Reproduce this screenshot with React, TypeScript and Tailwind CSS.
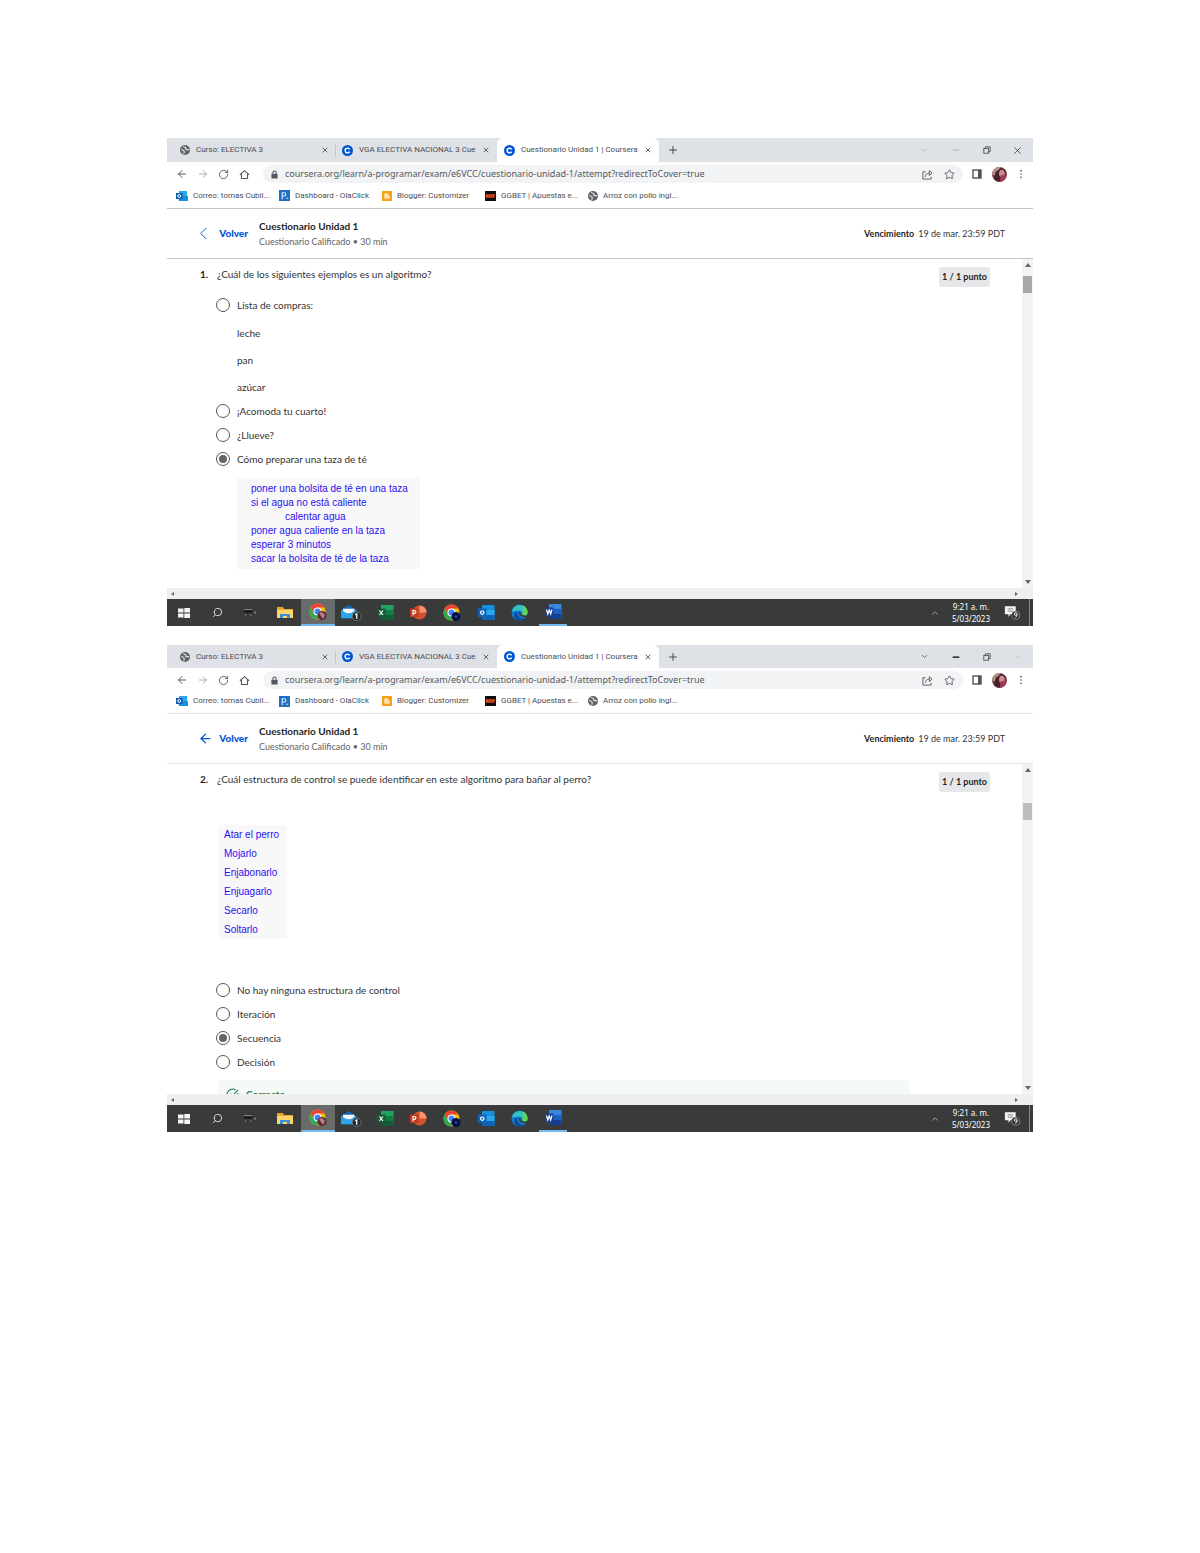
import React from "react";
import {
  ArrowLeft,
  ArrowRight,
  CheckCircle,
  ChevronDown,
  ChevronUp,
  Minus,
  Plus,
  RotateCw,
  Search,
  Star,
  X,
} from "lucide-react";

const Globe = () => (
  <svg viewBox="0 0 12 12" className="size-[10px] shrink-0">
    <circle cx="6" cy="6" r="6" fill="#5f6368" />
    <path d="M1.500 5.500C3 6 4.500 6 5 7.500S4 10 5 10.800M4 1.500c.5 1.500 2 1 3 2s-1 1.500.5 2 2.500-.5 3.500.5" stroke="#e8eaed" strokeWidth="1.300" fill="none" />
  </svg>
);

const CourseraIcon = () => (
  <svg viewBox="0 0 12 12" className="size-[11px] shrink-0">
    <circle cx="6" cy="6" r="6" fill="#0056d2" />
    <path d="M8.300 4.700A2.600 2.600 0 1 0 8.300 7.300" stroke="#fff" strokeWidth="1.600" fill="none" />
  </svg>
);

type TabProps = { icon: React.ReactNode; title: string; active?: boolean; divider?: boolean };

const Tab = ({ icon, title, active, divider }: TabProps) => (
  <div
    className={
      active
        ? "flex w-[162px] items-center gap-[6px] rounded-t-md bg-white px-[7px]"
        : "flex w-[162px] items-center gap-[6px] px-[7px]"
    }
  >
    {icon}
    <span className="flex-1 whitespace-nowrap text-[8px] leading-[12px] text-[#4a4d55]">{title}</span>
    <button aria-label="Cerrar pestaña" className="text-[#45484d]">
      <X size={8} strokeWidth={2.5} />
    </button>
    {divider && <span className="-mr-2 h-3 w-px bg-[#c3c6cc]" />}
  </div>
);

const OutlookMark = () => (
  <svg viewBox="0 0 12 10" className="h-[10px] w-[12px] shrink-0">
    <rect x="3" y="0" width="8" height="6" fill="#28a8ea" />
    <path d="M2 5h10v5H3z" fill="#1490df" />
    <rect x="0" y="2" width="6.500" height="6" fill="#0f5fb5" />
    <circle cx="3.200" cy="5" r="1.400" fill="none" stroke="#fff" />
  </svg>
);

const SquareMark = () => (
  <svg viewBox="0 0 12 12" className="size-[11px] shrink-0">
    <rect width="12" height="12" fill="#1f6fc5" />
    <path d="M3.500 10V3h2.200a1.800 1.800 0 0 1 0 3.600H3.500M8 9h2" stroke="#dcebfa" strokeWidth="1.200" fill="none" />
  </svg>
);

const BloggerMark = () => (
  <svg viewBox="0 0 12 12" className="size-[10px] shrink-0">
    <rect width="12" height="12" rx="1" fill="#f9a01b" />
    <path d="M3 3h4v2.500h2V9H3z" fill="#fff" />
    <path d="M4.500 4.800h1.500M4.500 7.200h3" stroke="#f9a01b" />
  </svg>
);

const GgMark = () => (
  <svg viewBox="0 0 12 11" className="h-[10px] w-[11px] shrink-0">
    <rect width="12" height="11" fill="#0c0c0c" />
    <path d="M1 3.500h10L10 7.500H1z" fill="#f04a16" />
    <path d="M3.500 4.500v2M6 4.500v2M8.500 4.500v2" stroke="#7c1f05" strokeWidth=".8" />
  </svg>
);

const Bookmark = ({ icon, children }: { icon: React.ReactNode; children: string }) => (
  <a href="#" className="flex w-[103px] items-center gap-[5px] whitespace-nowrap text-[8px] leading-[12px] text-[#4a4d55]">
    {icon}
    {children}
  </a>
);

const HomeIcon = () => (
  <svg viewBox="0 0 12 12" className="size-[11px]" fill="none" stroke="currentColor" strokeWidth="1.200">
    <path d="M1 6.300L6 1.800l5 4.500M2.700 5.500V10.400h6.600V5.500" />
  </svg>
);

const LockIcon = () => (
  <svg viewBox="0 0 8 10" className="h-[9px] w-[7px]">
    <rect x="0.500" y="4" width="7" height="5.500" rx=".6" fill="#55595f" />
    <path d="M2.200 4V2.700a1.800 1.800 0 0 1 3.600 0V4" fill="none" stroke="#55595f" strokeWidth="1.200" />
  </svg>
);

const ShareIcon = () => (
  <svg viewBox="0 0 12 12" className="size-[11px]" fill="none" stroke="currentColor" strokeWidth="1">
    <path d="M4 3H1v8h9V8.500M3.500 8.500c.3-2.500 2-4 4.500-4M8 1.800l3 2.700-3 2.700z" />
  </svg>
);

const SidePanel = () => (
  <svg viewBox="0 0 10 10" className="size-[10px]">
    <rect x="1" y="1" width="8" height="8" fill="none" stroke="#4f545a" strokeWidth="1.400" />
    <rect x="6" y="1" width="3" height="8" fill="#4f545a" />
  </svg>
);

const Avatar = () => (
  <svg viewBox="0 0 16 16" className="size-[15px] rounded-full">
    <rect width="16" height="16" fill="#7a3d48" />
    <path d="M0 0h9L4 9 0 8z" fill="#b39283" />
    <path d="M4 5l6-4 5 3-3 5-5 7-5-3z" fill="#45202d" />
    <ellipse cx="10.500" cy="7" rx="3" ry="4" fill="#d08c90" />
    <path d="M9 9l5-1 1 5-6 3z" fill="#a33c50" />
  </svg>
);

const Kebab = () => (
  <svg viewBox="0 0 4 12" className="h-[10px] w-[4px]" fill="#4f545a">
    <circle cx="2" cy="2" r="1" />
    <circle cx="2" cy="6" r="1" />
    <circle cx="2" cy="10" r="1" />
  </svg>
);

const Restore = () => (
  <svg viewBox="0 0 10 10" className="size-[8px]" fill="none" stroke="#55585e" strokeWidth="1.200">
    <rect x="1" y="3" width="6" height="6" />
    <path d="M3 3V1h6v6H7" />
  </svg>
);

type Variant = "first" | "second";

const BrowserChrome = ({ variant }: { variant: Variant }) => (
  <div className="font-[Roboto,sans-serif]">
    <div className={variant === "first" ? "flex h-6 items-stretch bg-[#dee1e6] pl-[6px]" : "flex h-[23px] items-stretch bg-[#dee1e6] pl-[6px]"}>
      <Tab icon={<Globe />} title="Curso: ELECTIVA 3" divider />
      <Tab icon={<CourseraIcon />} title="VGA ELECTIVA NACIONAL 3 Cue" />
      <Tab icon={<CourseraIcon />} title="Cuestionario Unidad 1 | Coursera" active />
      <button aria-label="Nueva pestaña" className="ml-2 text-[#45484d]">
        <Plus size={12} strokeWidth={2} />
      </button>
      <div className="ml-auto grid w-[124px] grid-cols-4 items-center justify-items-center text-[#45484d]">
        <button aria-label="Buscar pestañas" className={variant === "first" ? "text-[#a9acb2]" : ""}>
          <ChevronDown size={9} />
        </button>
        <button aria-label="Minimizar" className={variant === "first" ? "text-[#b9bcc2]" : "text-black"}>
          <Minus size={10} strokeWidth={3} />
        </button>
        <button aria-label="Restaurar">
          <Restore />
        </button>
        <button aria-label="Cerrar" className={variant === "first" ? "" : "text-[#c0c3c9]"}>
          {variant === "first" ? <X size={11} /> : <ChevronDown size={10} />}
        </button>
      </div>
    </div>
    <div className="flex h-6 items-center pr-2 text-[#55595f]">
      <div className="grid w-[88px] grid-cols-4 justify-items-center pl-1">
        <button aria-label="Atrás"><ArrowLeft size={12} /></button>
        <button aria-label="Adelante" className="text-[#a9acb0]"><ArrowRight size={12} /></button>
        <button aria-label="Recargar"><RotateCw size={11} /></button>
        <button aria-label="Inicio"><HomeIcon /></button>
      </div>
      <div className="ml-2 flex h-[18px] flex-1 items-center rounded-full bg-[#f1f3f4] px-2">
        <LockIcon />
        <input
          aria-label="Dirección"
          readOnly
          className="ml-[7px] min-w-0 flex-1 bg-transparent font-['Noto_Sans',sans-serif] text-[9px] leading-[12px] text-[#55595f] outline-none"
          value="coursera.org/learn/a-programar/exam/e6VCC/cuestionario-unidad-1/attempt?redirectToCover=true"
        />
        <button aria-label="Compartir" className="mr-[11px]"><ShareIcon /></button>
        <button aria-label="Favorito"><Star size={11} /></button>
      </div>
      <div className="ml-[9px] flex items-center gap-[10px]">
        <button aria-label="Panel lateral"><SidePanel /></button>
        <button aria-label="Perfil"><Avatar /></button>
        <button aria-label="Menú" className="mx-[2px]"><Kebab /></button>
      </div>
    </div>
    <div
      className={
        variant === "first"
          ? "flex h-[23px] items-center border-b border-[#c4c6c9] pb-[3px] pl-[9px]"
          : "flex h-[22px] items-center border-b border-[#e2e3e5] pb-[3px] pl-[9px]"
      }
    >
      <Bookmark icon={<OutlookMark />}>Correo: tomas Cubil...</Bookmark>
      <Bookmark icon={<SquareMark />}>Dashboard - OlaClick</Bookmark>
      <Bookmark icon={<BloggerMark />}>Blogger: Customizer</Bookmark>
      <Bookmark icon={<GgMark />}>GGBET | Apuestas e...</Bookmark>
      <Bookmark icon={<Globe />}>Arroz con pollo ingl...</Bookmark>
    </div>
  </div>
);

const QuizHeader = ({ variant, back }: { variant: Variant; back: React.ReactNode }) => (
  <header
    className={
      variant === "first"
        ? "flex h-[50px] items-center border-b border-[#c4c6c9] pl-[31px] pr-7"
        : "flex h-[50px] items-center border-b border-[#e2e3e5] pl-[31px] pr-7"
    }
  >
    <a href="#" className="flex w-[61px] items-center justify-between pr-[11px] text-[10px] font-black text-[#0056d2]">
      {back}
      Volver
    </a>
    <div>
      <h1 className="text-[10px] font-bold leading-[15px] text-[#1f1f1f]">Cuestionario Unidad 1</h1>
      <p className="text-[9px] leading-[15px] text-[#636363]">Cuestionario Calificado • 30 min</p>
    </div>
    <p className="ml-auto text-[9px] text-[#333]">
      <b className="mr-1 text-[#1f1f1f]">Vencimiento</b>
      19 de mar. 23:59 PDT
    </p>
  </header>
);

const Option = ({ name, label, checked }: { name: string; label: string; checked?: boolean }) => (
  <label className="flex h-[24px] items-center gap-[7px]">
    <input
      type="radio"
      name={name}
      defaultChecked={checked}
      className="size-[14px] appearance-none rounded-full border border-[#555] bg-clip-content p-[2px] checked:bg-[#666]"
    />
    {label}
  </label>
);

const Triangle = ({ d }: { d: string }) => (
  <svg viewBox="0 0 6 6" className="size-[6px]" fill="#666">
    <path d={d} />
  </svg>
);

const Pane = ({ thumb, children }: { thumb: string; children: React.ReactNode }) => (
  <div>
    <div className="flex">
      <main className="min-w-0 flex-1 text-[10px] leading-[14px] text-[#333]">{children}</main>
      <div className="flex w-[11px] flex-col items-center bg-[#f3f3f3] py-[3px]">
        <Triangle d="M0 5L3 1l3 4z" />
        <div className={thumb} />
        <div className="mt-auto">
          <Triangle d="M0 1l3 4 3-4z" />
        </div>
      </div>
    </div>
    <div className="flex h-[11px] items-center justify-between bg-[#efefef] pl-[3px] pr-[14px]">
      <Triangle d="M4 1L1 3l3 2z" />
      <Triangle d="M2 1l3 2-3 2z" />
    </div>
  </div>
);

const Question = ({ number, text }: { number: string; text: string }) => (
  <div className="flex items-start">
    <b className="w-[17px] text-[#1f1f1f]">{number}</b>
    <h2>{text}</h2>
    <span className="ml-auto rounded-[2px] bg-[#e5e7e8] px-[3px] py-[3px] text-[9px] font-bold leading-[14px] text-[#1f1f1f]">
      1 / 1 punto
    </span>
  </div>
);

const Windows = () => (
  <svg viewBox="0 0 12 12" className="size-[12px]" fill="#f5f5f5">
    <path d="M0 1.500h5.500v4H0zM6.300 1H12v4.500H6.300zM0 6.500h5.500v4H0zM6.300 6.500H12V11H6.300z" />
  </svg>
);

const TaskView = () => (
  <svg viewBox="0 0 14 10" className="h-[9px] w-[13px]" fill="#858585">
    <rect x="0" y="1" width="9" height="4" fill="#111" />
    <path d="M0 1h9v1.500H0zM1 7h1v2H1zM7 7h1v2H7zM11 4h2v2h-2z" />
  </svg>
);

const Folder = () => (
  <svg viewBox="0 0 16 13" className="h-[13px] w-[16px]">
    <path d="M0 1h6l1 2h9v9H0z" fill="#e9a92a" />
    <rect y="4" width="16" height="8" fill="#fdd56b" />
    <path d="M3 12V8h10v4h-3v-2H6v2z" fill="#3c8fd9" />
  </svg>
);

const Chrome = ({ badge }: { badge: "photo" | "navy" }) => (
  <svg viewBox="0 0 18 18" className="size-[18px]">
    <circle cx="8.500" cy="8.500" r="8" fill="#fbbc05" />
    <path d="M1.600 4.500a8 8 0 0 1 13.800 0H8.500L5.200 10.400z" fill="#ea4335" />
    <path d="M1.600 4.500a8 8 0 0 0 6.900 12l3.300-6H5.200z" fill="#34a853" />
    <circle cx="8.500" cy="8.500" r="4" fill="#fff" />
    <circle cx="8.500" cy="8.500" r="3" fill="#4285f4" />
    <circle cx="13" cy="12.500" r="4.500" fill={badge === "photo" ? "#5b2a35" : "#07104f"} />
    {badge === "photo" && <path d="M10 10l3-1 3 3-2 4-2-3z" fill="#b98286" />}
    {badge === "navy" && <circle cx="13" cy="12.500" r="1" fill="#5c66a8" />}
  </svg>
);

const Mail = () => (
  <svg viewBox="0 0 22 18" className="h-[17px] w-[21px]">
    <path d="M0 6l8-5 8 5v9H0z" fill="#1069b4" />
    <path d="M2 5h12v5H2z" fill="#f4f6f8" />
    <path d="M0 6l8 5 8-5v9H0z" fill="#2aa6ea" />
    <circle cx="16.500" cy="13" r="4.700" fill="#26292b" stroke="#888" strokeWidth=".7" />
    <path d="M15 11.500l1.600-1V16" stroke="#fff" strokeWidth="1.300" fill="none" />
  </svg>
);

type OfficeProps = { light: string; mid: string; dark: string; glyph: string; round?: boolean };

const Office = ({ light, mid, dark, glyph, round }: OfficeProps) => (
  <svg viewBox="0 0 17 15" className="h-[15px] w-[17px]">
    {round ? (
      <>
        <circle cx="9.500" cy="7.500" r="7" fill={light} />
        <path d="M9.500 7.500V.5a7 7 0 0 1 7 7z" fill={mid} />
      </>
    ) : (
      <>
        <rect x="4" y="0" width="12.500" height="15" fill={light} />
        <rect x="4" y="5" width="12.500" height="5" fill={mid} />
        <rect x="4" y="10" width="12.500" height="5" fill={dark} />
      </>
    )}
    <rect x="0" y="3.500" width="8.500" height="8.500" fill={dark} />
    <path d={glyph} stroke="#fff" strokeWidth="1.200" fill="none" />
  </svg>
);

const Edge = () => (
  <svg viewBox="0 0 18 18" className="size-[17px]">
    <circle cx="9" cy="9" r="8.500" fill="#1579c9" />
    <path d="M1 8A8.300 8.300 0 0 1 17.500 9c0 3-3 4.500-6 3.500 1.500-2 .5-5.500-3-5.500S2 8 1 8z" fill="#35c1c4" />
    <path d="M12 1.500c4 1 5.500 4.500 5.500 7.500 0 3-3 4.500-6 3.500 1.500-2 2-7 .5-11z" fill="#63d651" />
    <path d="M7 8c-1.500 3 .5 6.500 4 7.500 2 .4 4-.5 5-1.500-3 5-9 4.500-11.500 1S4 8.500 7 8z" fill="#0c4a9b" />
    <path d="M9.500 8.500c-1 2.500 1 5 8.500 4.500" stroke="#383c3a" strokeWidth="1.800" fill="none" />
  </svg>
);

const Notification = () => (
  <svg viewBox="0 0 20 16" className="h-[15px] w-[18px]">
    <path d="M1 1h12v9H7l-2 3v-3H1z" fill="#f5f5f5" />
    <path d="M4 4h6M4 6.500h6" stroke="#777" />
    <circle cx="13" cy="11" r="4.500" fill="#303231" stroke="#aaa" strokeWidth=".7" />
    <path d="M14.500 10a1.500 1.500 0 1 0-1.500 1.300c1 0 1.500-.8 1.500-1.300 0 2-.5 3-2 3.500" stroke="#fff" fill="none" />
  </svg>
);

const apps: { label: string; icon: React.ReactNode; style?: "active" | "open" }[] = [
  { label: "Inicio", icon: <Windows /> },
  { label: "Buscar", icon: <Search size={11} className="-scale-x-100 text-[#e4e4e4]" /> },
  { label: "Vista de tareas", icon: <TaskView /> },
  { label: "Explorador", icon: <Folder /> },
  { label: "Chrome", icon: <Chrome badge="photo" />, style: "active" },
  { label: "Correo", icon: <Mail /> },
  { label: "Excel", icon: <Office light="#21a366" mid="#107c41" dark="#135c36" glyph="M2.500 5.500l3.500 4.500M6 5.500L2.500 10" /> },
  { label: "PowerPoint", icon: <Office round light="#d35230" mid="#ff8f6b" dark="#c03a1c" glyph="M3 10.500v-5h1.500a1.400 1.400 0 0 1 0 2.800H3" /> },
  { label: "Chrome perfil 2", icon: <Chrome badge="navy" /> },
  { label: "Outlook", icon: <Office light="#1490df" mid="#28a8ea" dark="#0f64b8" glyph="M4.200 6a1.700 1.700 0 1 0 .1 0z" /> },
  { label: "Edge", icon: <Edge /> },
  { label: "Word", icon: <Office light="#3a86dd" mid="#1f5fc0" dark="#143f95" glyph="M1.500 5.500l1.300 4.500 1.500-4 1.400 4L7 5.500" />, style: "open" },
];

const Taskbar = () => (
  <footer className="flex h-[27px] items-stretch bg-[#383b39] text-white">
    <nav className="grid w-[403px] grid-cols-12">
      {apps.map((app) => (
        <button
          key={app.label}
          aria-label={app.label}
          className={
            app.style === "active"
              ? "flex items-center justify-center border-b-2 border-[#76b9ed] bg-[#696b6a]"
              : app.style === "open"
                ? "mx-[3px] flex items-center justify-center border-b-2 border-[#76b9ed]"
                : "flex items-center justify-center"
          }
        >
          {app.icon}
        </button>
      ))}
    </nav>
    <div className="ml-auto flex items-center pr-[3px]">
      <ChevronUp size={10} className="mr-[7px] text-[#b5b5b5]" />
      <p className="w-[48px] text-center font-['Noto_Sans',sans-serif] text-[8px] leading-[12px]">
        9:21 a. m.
        <br />
        5/03/2023
      </p>
      <button aria-label="Notificaciones" className="ml-[9px] mr-[7px]">
        <Notification />
      </button>
      <span className="h-full w-px bg-[#8a8c8b]" />
    </div>
  </footer>
);

const teaSteps = [
  "poner una bolsita de té en una taza",
  "si el agua no está caliente",
  "calentar agua",
  "poner agua caliente en la taza",
  "esperar 3 minutos",
  "sacar la bolsita de té de la taza",
];

const dogSteps = ["Atar el perro", "Mojarlo", "Enjabonarlo", "Enjuagarlo", "Secarlo", "Soltarlo"];

export default function App() {
  return (
    <div className="min-h-screen bg-white px-[167px] pt-[138px] font-[Lato,sans-serif]">
      <section className="mb-[19px]">
        <BrowserChrome variant="first" />
        <QuizHeader
          variant="first"
          back={
            <svg viewBox="0 0 14 14" className="size-[13px]" fill="none" stroke="#0056d2">
              <path d="M9 1L3 7l6 6" />
            </svg>
          }
        />
        <Pane thumb="mt-[8px] h-[17px] w-[9px] bg-[#a8a8a8]">
          <div className="pb-[19px] pl-[33px] pr-8 pt-2">
            <Question number="1." text="¿Cuál de los siguientes ejemplos es un algoritmo?" />
            <div className="pl-[16px] pt-[6px]">
              <Option name="q1" label="Lista de compras:" />
              <div className="flex flex-col gap-[13px] pb-[5px] pl-[21px] pt-[9px]">
                <p>leche</p>
                <p>pan</p>
                <p>azúcar</p>
              </div>
              <Option name="q1" label="¡Acomoda tu cuarto!" />
              <Option name="q1" label="¿Llueve?" />
              <Option name="q1" label="Cómo preparar una taza de té" checked />
              <ul className="ml-[21px] mt-[7px] w-[183px] whitespace-nowrap bg-[#f8f8f9] pb-[3px] pl-[14px] pt-[4px] font-['Liberation_Sans',sans-serif] leading-[14px] text-[#2a10f0]">
                {teaSteps.map((step) => (
                  <li key={step} className={step === "calentar agua" ? "pl-[34px]" : ""}>
                    {step}
                  </li>
                ))}
              </ul>
            </div>
          </div>
        </Pane>
        <Taskbar />
      </section>

      <section>
        <BrowserChrome variant="second" />
        <QuizHeader variant="second" back={<ArrowLeft size={15} />} />
        <Pane thumb="mt-[30px] h-[17px] w-[9px] bg-[#bdbdbd]">
          <div className="pl-[33px] pr-8 pt-2">
            <Question number="2." text="¿Cuál estructura de control se puede identificar en este algoritmo para bañar al perro?" />
            <ul className="ml-[18px] mt-[33px] w-[69px] bg-[#f8f8f9] px-[6px] font-['Liberation_Sans',sans-serif] leading-[19px] text-[#2a10f0]">
              {dogSteps.map((step) => (
                <li key={step}>{step}</li>
              ))}
            </ul>
            <div className="pl-[16px] pt-[39px]">
              <Option name="q2" label="No hay ninguna estructura de control" />
              <Option name="q2" label="Iteración" />
              <Option name="q2" label="Secuencia" checked />
              <Option name="q2" label="Decisión" />
            </div>
            <div className="ml-[18px] mr-[81px] mt-[6px] h-[14px] overflow-hidden bg-[#f5faf8] pl-2 pt-[7px] text-[#1f7a4d]">
              <p className="flex items-center gap-[7px] font-bold">
                <CheckCircle size={13} />
                Correcto
              </p>
            </div>
          </div>
        </Pane>
        <Taskbar />
      </section>
    </div>
  );
}
